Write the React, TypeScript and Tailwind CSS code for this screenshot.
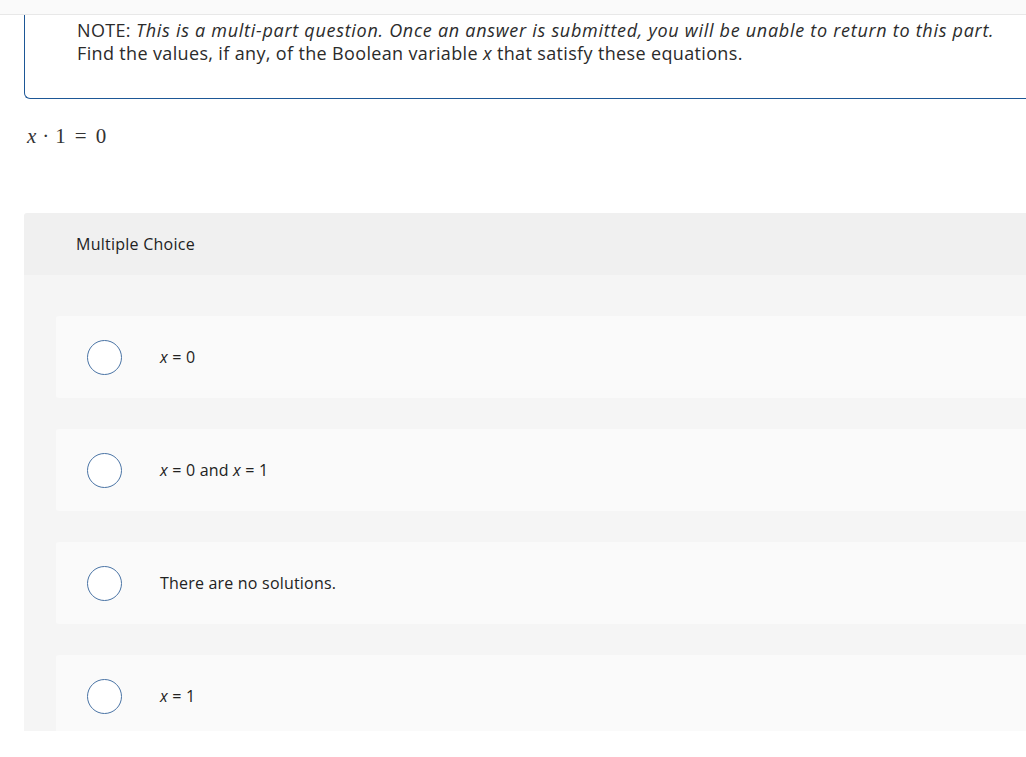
import React from 'react';

const options = [
  { id: 'a', label: <><i>x</i>&nbsp;=&nbsp;0</> },
  { id: 'b', label: <><i>x</i>&nbsp;=&nbsp;0 and <i>x</i>&nbsp;=&nbsp;1</> },
  { id: 'c', label: <>There are no solutions.</> },
  { id: 'd', label: <><i>x</i>&nbsp;=&nbsp;1</> },
];

const App: React.FC = () => {
  return (
    <div className="w-[1026px] h-[757px] overflow-hidden bg-white text-[#2b2b2b] font-['Open_Sans',sans-serif]">
      <div className="h-[15px] bg-[#fafafa] border-b border-[#e8e8e8]" />
      <div className="ml-[24px] h-[84px] border-l border-b border-[#1d5796] rounded-bl-[6px] pl-[52px] pt-[4px] text-[18px] leading-[23px] tracking-[0.35px] whitespace-nowrap">
        <p>
          NOTE: <i className="tracking-[0.72px]">This is a multi-part question. Once an answer is submitted, you will be unable to return to this part.</i>
        </p>
        <p>
          Find the values, if any, of the Boolean variable <i>x</i> that satisfy these equations.
        </p>
      </div>

      <div className="ml-[27px] mt-[26px] h-[24px] flex items-center text-[21px] font-['Liberation_Serif',serif] text-[#333]">
        <i>x</i>
        <span className="mx-[6px]">·</span>
        <span>1</span>
        <span className="mx-[9px]">=</span>
        <span>0</span>
      </div>

      <div className="ml-[24px] mt-[64px]">
        <div className="h-[62px] bg-[#f0f0f0] rounded-tl-[3px] flex items-center pl-[52px] text-[16px] tracking-[0.25px] text-[#222]">
          Multiple Choice
        </div>
        <div className="h-[456px] overflow-hidden bg-[#f5f5f5] pt-[41px] pl-[32px] flex flex-col gap-[31px]">
          {options.map((o) => (
            <div
              key={o.id}
              className="h-[82px] shrink-0 bg-[#fafafa] rounded-l-[3px] flex items-center pl-[31px]"
            >
              <span className="w-[35px] h-[35px] rounded-full border-[1.5px] border-[#4a74a5] bg-white shrink-0" />
              <span className="ml-[38px] text-[16px] tracking-[0.2px] text-[#222]">{o.label}</span>
            </div>
          ))}
        </div>
      </div>
    </div>
  );
};

export default App;
